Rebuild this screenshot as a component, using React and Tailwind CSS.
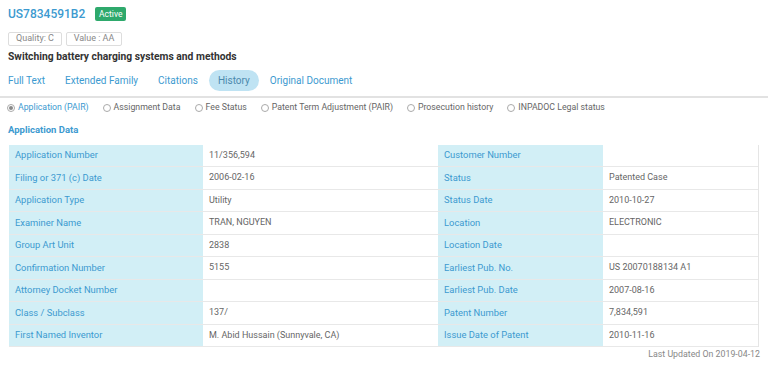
import React from "react";

const rows = [
  ["Application Number", "11/356,594", "Customer Number", ""],
  ["Filing or 371 (c) Date", "2006-02-16", "Status", "Patented Case"],
  ["Application Type", "Utility", "Status Date", "2010-10-27"],
  ["Examiner Name", "TRAN, NGUYEN", "Location", "ELECTRONIC"],
  ["Group Art Unit", "2838", "Location Date", ""],
  ["Confirmation Number", "5155", "Earliest Pub. No.", "US 20070188134 A1"],
  ["Attorney Docket Number", "", "Earliest Pub. Date", "2007-08-16"],
  ["Class / Subclass", "137/", "Patent Number", "7,834,591"],
  ["First Named Inventor", "M. Abid Hussain (Sunnyvale, CA)", "Issue Date of Patent", "2010-11-16"],
];

const radios = [
  ["Application (PAIR)", true],
  ["Assignment Data", false],
  ["Fee Status", false],
  ["Patent Term Adjustment (PAIR)", false],
  ["Prosecution history", false],
  ["INPADOC Legal status", false],
];

export default function App() {
  return (
    <div className="w-[768px] h-[365px] bg-white overflow-hidden font-['Roboto',sans-serif]">
      <div className="px-2 pt-[6px]">
        <div className="flex items-center gap-[10px] h-[16px]">
          <span className="text-[12px] font-medium text-[#3c9ad0] leading-none">US7834591B2</span>
          <span className="bg-[#2ea96c] text-white text-[8.5px] leading-none w-[31px] h-[14px] flex items-center justify-center rounded-[2px]">Active</span>
        </div>
        <div className="flex gap-[4px] mt-[10px]">
          <span className="w-[54px] h-[14px] border border-[#dddddd] rounded-[2px] text-[9px] text-[#888] flex items-center justify-center">Quality: C</span>
          <span className="w-[56px] h-[14px] border border-[#dddddd] rounded-[2px] text-[9px] text-[#888] flex items-center justify-center">Value : AA</span>
        </div>
        <div className="mt-[4px] text-[10.3px] font-bold text-[#333] leading-[14px]">Switching battery charging systems and methods</div>
        <div className="flex items-center mt-[6px] h-[21px] text-[10px] text-[#3c9ad0]">
          <span className="mr-[20px]">Full Text</span>
          <span className="mr-[20px]">Extended Family</span>
          <span className="mr-[11px]">Citations</span>
          <span className="bg-[#bfe3f3] text-[#4b89ad] rounded-full h-[21px] w-[50px] flex items-center justify-center mr-[11px]">History</span>
          <span>Original Document</span>
        </div>
      </div>
      <div className="mt-[5px] h-[2px] bg-[#e2e2e2]" />
      <div className="flex items-center px-[7px] h-[18px] mt-[1px] text-[8.75px] text-[#666]">
        {radios.map(([label, on]) => (
          <div key={label} className="flex items-center mr-[14px]">
            <span className="w-[8px] h-[8px] rounded-full border border-[#aaa] flex items-center justify-center mr-[3px]">
              {on && <span className="w-[4px] h-[4px] rounded-full bg-[#888]" />}
            </span>
            <span className={on ? "text-[#3c9ad0]" : ""}>{label}</span>
          </div>
        ))}
      </div>
      <div className="px-2 mt-[7px] text-[9.5px] font-bold text-[#3c9ad0] leading-[12px]">Application Data</div>
      <div className="ml-[9px] mt-[9px] w-[750px] border-r border-[#e5e5e5]">
        {rows.map((r, i) => (
          <div key={i} className={"flex border-b border-[#e8e8e8] " + (i % 2 ? "h-[23px]" : "h-[22px]")}>
            <div className="w-[194px] bg-[#d2eff6] text-[9.4px] text-[#3c9ad0] pl-[6px] flex items-center">{r[0]}</div>
            <div className="w-[235px] text-[9px] text-[#666] pl-[6px] flex items-center">{r[1]}</div>
            <div className="w-[165px] bg-[#d2eff6] text-[9.4px] text-[#3c9ad0] pl-[6px] flex items-center">{r[2]}</div>
            <div className="flex-1 text-[9px] text-[#666] pl-[6px] flex items-center">{r[3]}</div>
          </div>
        ))}
      </div>
      <div className="w-[760px] text-right text-[8.8px] text-[#888] mt-[1px]">Last Updated On 2019-04-12</div>
    </div>
  );
}
